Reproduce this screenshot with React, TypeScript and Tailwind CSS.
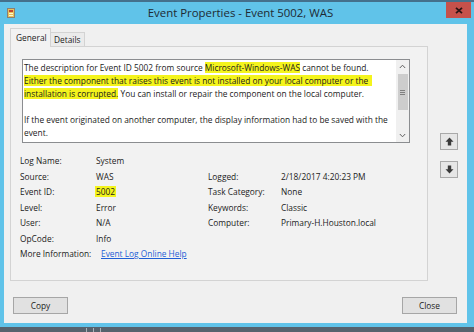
const fields = [
  { label: "Log Name:", value: "System" },
  { label: "Source:", value: "WAS" },
  { label: "Event ID:", value: "5002", mark: true },
  { label: "Level:", value: "Error" },
  { label: "User:", value: "N/A" },
  { label: "OpCode:", value: "Info" },
];

const rightFields = [
  { label: "Logged:", value: "2/18/2017 4:20:23 PM" },
  { label: "Task Category:", value: "None" },
  { label: "Keywords:", value: "Classic" },
  { label: "Computer:", value: "Primary-H.Houston.local" },
];

function AppIcon() {
  return (
    <svg width="8" height="10" viewBox="0 0 8 10">
      <rect x="0.5" y="0.5" width="7" height="9" fill="#e9c35a" stroke="#8a7f73" />
      <rect x="2" y="2" width="4" height="2" fill="#c2452f" />
      <rect x="2" y="5" width="4" height="1" fill="#fff6d0" />
      <rect x="2" y="7" width="4" height="1" fill="#fff6d0" />
    </svg>
  );
}

function SideArrow({ down }: { down?: boolean }) {
  return (
    <div className="w-[18px] h-[17px] bg-[#e6e6e6] border border-[#a9a9a9] flex items-center justify-center">
      <svg width="9" height="9" viewBox="0 0 9 9" className={down ? "rotate-180" : ""}>
        <path d="M4.5 0.5 L8.5 4.8 H6.2 V8.5 H2.8 V4.8 H0.5 Z" fill="#3a3a3a" />
      </svg>
    </div>
  );
}

function Scrollbar() {
  return (
    <div className="w-[13px] bg-[#f0f0f0] flex flex-col items-center">
      <div className="h-[13px] flex items-center justify-center">
        <svg width="7" height="5" viewBox="0 0 7 5">
          <path d="M0.8 4 L3.5 1.2 L6.2 4" fill="none" stroke="#606060" strokeWidth="1" />
        </svg>
      </div>
      <div className="w-[10px] h-[36px] mt-[1px] bg-[#cdcdcd] flex flex-col items-center justify-center gap-[1px]">
        <div className="w-[5px] h-px bg-[#808080]" />
        <div className="w-[5px] h-px bg-[#808080]" />
        <div className="w-[5px] h-px bg-[#808080]" />
      </div>
      <div className="flex-1" />
      <div className="h-[13px] flex items-center justify-center">
        <svg width="7" height="5" viewBox="0 0 7 5">
          <path d="M0.8 1 L3.5 3.8 L6.2 1" fill="none" stroke="#606060" strokeWidth="1" />
        </svg>
      </div>
    </div>
  );
}

export default function App() {
  return (
    <div className="w-[474px] h-[332px] overflow-hidden bg-[#60c3e9] flex flex-col font-['Open_Sans',sans-serif] text-[#1b1b1b] text-[8.35px]">
      <div className="h-[2px] bg-[#44708c]" />

      {/* title bar */}
      <div className="h-[22px] flex items-start">
        <div className="w-[7px]" />
        <div className="pt-[6px]">
          <AppIcon />
        </div>
        <div className="flex-1 text-center text-[11.4px] leading-[22px] text-[#1e2a33] pl-[20px]">
          Event Properties - Event 5002, WAS
        </div>
        <div className="w-[25px] h-[16px] bg-[#c6514b] flex items-center justify-center">
          <svg width="8" height="7" viewBox="0 0 8 7">
            <path d="M1 0.8 L7 6.2 M7 0.8 L1 6.2" stroke="#2a1414" strokeWidth="1.8" />
          </svg>
        </div>
        <div className="w-[3px]" />
      </div>

      {/* client area */}
      <div className="h-[299px] ml-[4px] mr-[7px] bg-[#f0f0f0] flex flex-col">
        <div className="pt-[4px] pl-[6px] flex items-end h-[22px]">
          <div className="w-[41px] h-[19px] -mb-px relative z-10 bg-[#f2f2f2] border border-b-0 border-[#d3d3d3] pl-[5px] pt-[2px] leading-[13px]">
            General
          </div>
          <div className="w-[34px] h-[14px] bg-[#ebebeb] border border-b-0 border-l-0 border-[#d3d3d3] pl-[3px] leading-[13px]">
            Details
          </div>
        </div>

        <div className="flex pl-[6px]">
          <div className="w-[418px] h-[235px] bg-[#f2f2f2] border border-[#d3d3d3] flex flex-col">
            {/* description box */}
            <div className="mt-[12px] ml-[11px] w-[388px] h-[84px] bg-white border border-[#8b8d90] flex">
              <div className="flex-1 overflow-hidden pl-[1px] pt-[1px] leading-[13px] whitespace-nowrap">
                <div>
                  The description for Event ID 5002 from source{" "}
                  <span className="bg-[#f4f41c]">Microsoft-Windows-WAS</span> cannot be found.
                </div>
                <div>
                  <span className="bg-[#f4f41c] pr-[4px]">
                    Either the component that raises this event is not installed on your local computer or the
                  </span>
                </div>
                <div>
                  <span className="bg-[#f4f41c]">installation is corrupted.</span> You can install or repair the
                  component on the local computer.
                </div>
                <div className="h-[13px]" />
                <div>
                  If the event originated on another computer, the display information had to be saved with the
                </div>
                <div>event.</div>
                <div className="text-[#555]">The following information was included with the event:</div>
              </div>
              <Scrollbar />
            </div>

            {/* properties */}
            <div className="mt-[10px] ml-[9px] flex leading-[15.5px]">
              <div className="w-[188px]">
                {fields.map((f) => (
                  <div key={f.label} className="flex">
                    <div className="w-[76px]">{f.label}</div>
                    <div>
                      {f.mark ? <span className="bg-[#f4f41c] px-[1px] -ml-px">{f.value}</span> : f.value}
                    </div>
                  </div>
                ))}
                <div className="flex">
                  <div className="w-[81px]">More Information:</div>
                  <div className="text-[#1f5fd6] underline">Event Log Online Help</div>
                </div>
              </div>
              <div className="pt-[15.5px]">
                {rightFields.map((f) => (
                  <div key={f.label} className="flex">
                    <div className="w-[73px]">{f.label}</div>
                    <div>{f.value}</div>
                  </div>
                ))}
              </div>
            </div>
          </div>

          <div className="ml-[12px] pt-[87px] flex flex-col gap-[11px]">
            <SideArrow />
            <SideArrow down />
          </div>
        </div>

        <div className="mt-[16px] px-[9px] pr-[10px] flex justify-between">
          <button className="w-[55px] h-[17px] bg-[#e1e1e1] border border-[#a6a6a6] leading-[15px] text-[8.35px]">
            Copy
          </button>
          <button className="w-[55px] h-[17px] bg-[#e1e1e1] border border-[#a6a6a6] leading-[15px] text-[8.35px]">
            Close
          </button>
        </div>
      </div>

      <div className="h-[4px]" />
      <div className="h-[5px] bg-[#56626d] flex items-center pl-[86px] gap-[6px]">
        <div className="w-px h-[4px] bg-[#aab2b8]" />
        <div className="w-px h-[4px] bg-[#aab2b8]" />
        <div className="w-px h-[4px] bg-[#aab2b8]" />
      </div>
    </div>
  );
}
